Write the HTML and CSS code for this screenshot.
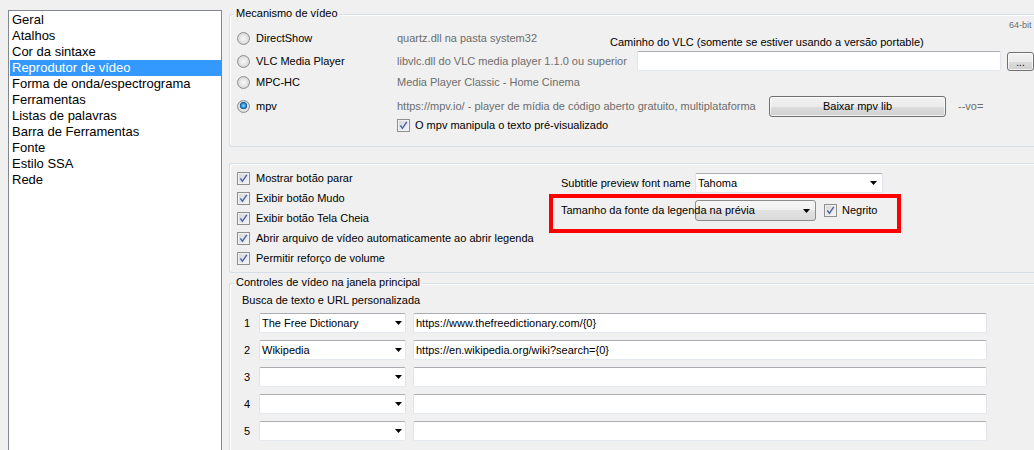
FILE: index.html
```html
<!DOCTYPE html>
<html lang="pt">
<head>
<meta charset="utf-8">
<title>Configurações - Reprodutor de vídeo</title>
<link rel="stylesheet" href="styles.css">
</head>
<body>
<div class="window">
  <ul class="nav">
    <li>Geral</li>
    <li>Atalhos</li>
    <li>Cor da sintaxe</li>
    <li class="sel">Reprodutor de vídeo</li>
    <li>Forma de onda/espectrograma</li>
    <li>Ferramentas</li>
    <li>Listas de palavras</li>
    <li>Barra de Ferramentas</li>
    <li>Fonte</li>
    <li>Estilo SSA</li>
    <li>Rede</li>
  </ul>

  <div class="main">
    <section class="group g1">
      <div class="legend">Mecanismo de vídeo</div>
      <div class="bits">64-bit</div>
      <div class="erow r1">
        <label class="opt"><span class="radio"></span>DirectShow</label>
        <span class="desc d1">quartz.dll na pasta system32</span>
        <span class="vlc-label">Caminho do VLC (somente se estiver usando a versão portable)</span>
      </div>
      <div class="erow r2">
        <label class="opt"><span class="radio"></span>VLC Media Player</label>
        <span class="desc d2">libvlc.dll do VLC media player 1.1.0 ou superior</span>
        <span class="textbox vlc-path"></span>
        <span class="btn btn-small">...</span>
      </div>
      <div class="erow r3">
        <label class="opt"><span class="radio"></span>MPC-HC</label>
        <span class="desc">Media Player Classic - Home Cinema</span>
      </div>
      <div class="erow r4">
        <label class="opt"><span class="radio on"></span>mpv</label>
        <span class="desc d4">https://mpv.io/ - player de mídia de código aberto gratuito, multiplataforma</span>
        <span class="btn btn-mpv">Baixar mpv lib</span>
        <span class="vo">--vo=</span>
      </div>
      <div class="erow r5">
        <span class="cb"><svg viewBox="0 0 11 11" width="11" height="11"><path d="M2.3 5.4 L4.4 8.3 L8.8 1.8" fill="none" stroke="#4a67a8" stroke-width="1.5"/></svg></span>
        <span>O mpv manipula o texto pré-visualizado</span>
      </div>
    </section>

    <section class="group g2">
      <div class="checks">
        <div class="check-row"><span class="cb"><svg viewBox="0 0 11 11" width="11" height="11"><path d="M2.3 5.4 L4.4 8.3 L8.8 1.8" fill="none" stroke="#4a67a8" stroke-width="1.5"/></svg></span>Mostrar botão parar</div>
        <div class="check-row"><span class="cb"><svg viewBox="0 0 11 11" width="11" height="11"><path d="M2.3 5.4 L4.4 8.3 L8.8 1.8" fill="none" stroke="#4a67a8" stroke-width="1.5"/></svg></span>Exibir botão Mudo</div>
        <div class="check-row"><span class="cb"><svg viewBox="0 0 11 11" width="11" height="11"><path d="M2.3 5.4 L4.4 8.3 L8.8 1.8" fill="none" stroke="#4a67a8" stroke-width="1.5"/></svg></span>Exibir botão Tela Cheia</div>
        <div class="check-row"><span class="cb"><svg viewBox="0 0 11 11" width="11" height="11"><path d="M2.3 5.4 L4.4 8.3 L8.8 1.8" fill="none" stroke="#4a67a8" stroke-width="1.5"/></svg></span>Abrir arquivo de vídeo automaticamente ao abrir legenda</div>
        <div class="check-row"><span class="cb"><svg viewBox="0 0 11 11" width="11" height="11"><path d="M2.3 5.4 L4.4 8.3 L8.8 1.8" fill="none" stroke="#4a67a8" stroke-width="1.5"/></svg></span>Permitir reforço de volume</div>
      </div>
      <div class="subs">
        <div class="font-row">
          <span class="lbl">Subtitle preview font name</span>
          <span class="combo combo-font"><span class="ctext">Tahoma</span><svg class="arr" width="7" height="4" viewBox="0 0 7 4"><polygon points="0,0 7,0 3.5,4"/></svg></span>
        </div>
        <div class="redbox">
          <div class="size-row">
            <span class="lbl lbl-over">Tamanho da fonte da legenda na prévia</span>
            <span class="combo-size"><svg class="arr" width="7" height="4" viewBox="0 0 7 4"><polygon points="0,0 7,0 3.5,4"/></svg></span>
            <span class="cb cb-neg"><svg viewBox="0 0 11 11" width="11" height="11"><path d="M2.3 5.4 L4.4 8.3 L8.8 1.8" fill="none" stroke="#4a67a8" stroke-width="1.5"/></svg></span>
            <span>Negrito</span>
          </div>
        </div>
      </div>
    </section>

    <section class="group g3">
      <div class="legend">Controles de vídeo na janela principal</div>
      <div class="busca">Busca de texto e URL personalizada</div>
      <div class="url-rows">
        <div class="url-row">
          <span class="num">1</span>
          <span class="combo combo-site"><span class="ctext">The Free Dictionary</span><svg class="arr" width="7" height="4" viewBox="0 0 7 4"><polygon points="0,0 7,0 3.5,4"/></svg></span>
          <span class="textbox url">https://www.thefreedictionary.com/{0}</span>
        </div>
        <div class="url-row">
          <span class="num">2</span>
          <span class="combo combo-site"><span class="ctext">Wikipedia</span><svg class="arr" width="7" height="4" viewBox="0 0 7 4"><polygon points="0,0 7,0 3.5,4"/></svg></span>
          <span class="textbox url">https://en.wikipedia.org/wiki?search={0}</span>
        </div>
        <div class="url-row">
          <span class="num">3</span>
          <span class="combo combo-site"><span class="ctext"></span><svg class="arr" width="7" height="4" viewBox="0 0 7 4"><polygon points="0,0 7,0 3.5,4"/></svg></span>
          <span class="textbox url"></span>
        </div>
        <div class="url-row">
          <span class="num">4</span>
          <span class="combo combo-site"><span class="ctext"></span><svg class="arr" width="7" height="4" viewBox="0 0 7 4"><polygon points="0,0 7,0 3.5,4"/></svg></span>
          <span class="textbox url"></span>
        </div>
        <div class="url-row">
          <span class="num">5</span>
          <span class="combo combo-site"><span class="ctext"></span><svg class="arr" width="7" height="4" viewBox="0 0 7 4"><polygon points="0,0 7,0 3.5,4"/></svg></span>
          <span class="textbox url"></span>
        </div>
      </div>
    </section>
  </div>
</div>
</body>
</html>
```

FILE: styles.css
```css
html, body {
  margin: 0;
  padding: 0;
  width: 1034px;
  height: 450px;
  overflow: hidden;
  background: #f0f0f0;
}

body {
  font-family: "Liberation Sans", Arial, sans-serif;
  font-size: 11px;
  line-height: 13px;
  color: #000;
}

.window {
  display: flex;
  align-items: flex-start;
  padding: 10px 0 0 8px;
  height: 440px;
}

/* left category list */
.nav {
  list-style: none;
  margin: 0;
  padding: 1px 0 0 1px;
  width: 214px;
  height: 440px;
  box-sizing: border-box;
  border: 1px solid #828790;
  border-bottom: 0;
  background: #fff;
  font-size: 13px;
  line-height: 16px;
  flex: none;
}

.nav li {
  height: 16px;
  padding-left: 2px;
  white-space: nowrap;
}

.nav li.sel {
  background: #3399ff;
  color: #fff;
}

/* right side */
.main {
  margin: 4px 0 0 7px;
  width: 805px;
  display: flex;
  flex-direction: column;
  flex: none;
}

.group {
  border: 1px solid #d5dfe5;
  border-right: 0;
  border-radius: 3px 0 0 3px;
  box-shadow: inset 1px 1px 0 #fff;
  box-sizing: border-box;
}

.legend {
  width: fit-content;
  height: 13px;
  line-height: 13px;
  margin: -8px 0 0 4px;
  padding: 0 2px;
  background: #f0f0f0;
  white-space: nowrap;
}

/* group 1 */
.g1 {
  height: 133px;
}

.bits {
  height: 10px;
  margin-left: 779px;
  font-size: 9px;
  line-height: 10px;
  color: #6d6d6d;
}

.erow {
  display: flex;
  align-items: center;
  padding-left: 7px;
  white-space: nowrap;
}

.opt {
  display: flex;
  align-items: center;
  width: 160px;
  flex: none;
}

.radio {
  width: 13px;
  height: 13px;
  margin-right: 6px;
  border-radius: 50%;
  box-sizing: border-box;
  border: 1px solid #8e8f8f;
  background: radial-gradient(circle at 50% 50%, #f8f8f8 0, #e9e9e9 3px, #d4d4d4 6px);
  flex: none;
}

.radio.on {
  background:
    radial-gradient(circle at 50% 42%, #9be0ff 0, #2c94e0 2px, #1b5a93 3.4px, rgba(27,90,147,0) 4px),
    radial-gradient(circle at 50% 50%, #f8f8f8 0, #e9e9e9 3px, #d4d4d4 6px);
}

.desc {
  color: #6d6d6d;
  flex: none;
}

.d1 { width: 213px; }
.d2 { width: 240px; }
.d4 { width: 372px; }

.r1 { height: 16px; }

.vlc-label {
  align-self: flex-start;
  margin-top: 6px;
}

.r2 { height: 20px; margin-top: 5px; }
.r3 { height: 16px; margin-top: 3px; }
.r4 { height: 21px; margin-top: 6px; }
.r5 { height: 13px; margin-top: 2px; padding-left: 167px; }

.textbox {
  display: flex;
  align-items: center;
  height: 20px;
  box-sizing: border-box;
  background: #fff;
  border: 1px solid;
  border-color: #abadb3 #e2e3ea #e3e9ef #e2e3ea;
  border-radius: 2px;
  flex: none;
  white-space: nowrap;
  overflow: hidden;
}

.vlc-path { width: 364px; }

.btn {
  display: flex;
  align-items: center;
  justify-content: center;
  box-sizing: border-box;
  border: 1px solid #707070;
  border-radius: 3px;
  background: linear-gradient(#f2f2f2, #ebebeb 50%, #dddddd 50%, #cfcfcf);
  box-shadow: inset 0 0 0 1px rgba(255,255,255,0.7);
  flex: none;
}

.btn-small {
  width: 27px;
  height: 19px;
  margin-left: 6px;
  font-size: 10px;
  padding-top: 2px;
}

.btn-mpv {
  width: 177px;
  height: 21px;
}

.vo {
  margin-left: 12px;
  color: #6d6d6d;
}

/* checkbox */
.cb {
  display: flex;
  align-items: center;
  justify-content: center;
  width: 13px;
  height: 13px;
  box-sizing: border-box;
  margin-right: 6px;
  border: 1px solid #8f8f8f;
  background: linear-gradient(135deg, #d6d6d6, #f6f6f6);
  box-shadow: inset 0 0 0 1px #f2f2f2;
  flex: none;
}

.r5 .cb { margin-right: 5px; }

/* group 2 */
.g2 {
  height: 110px;
  margin-top: 16px;
  display: flex;
  align-items: flex-start;
}

.checks {
  width: 312px;
  padding: 4px 0 0 7px;
  flex: none;
}

.check-row {
  display: flex;
  align-items: center;
  height: 20px;
  white-space: nowrap;
}

.subs {
  display: flex;
  flex-direction: column;
  align-items: flex-start;
  padding-top: 9px;
}

.font-row {
  display: flex;
  align-items: center;
  height: 20px;
  margin-left: 12px;
}

.lbl {
  width: 134px;
  flex: none;
  white-space: nowrap;
}

.combo {
  display: flex;
  align-items: center;
  height: 20px;
  box-sizing: border-box;
  padding: 0 3px 0 2px;
  background: #fff;
  border: 1px solid;
  border-color: #abadb3 #e2e3ea #e3e9ef #e2e3ea;
  border-radius: 2px;
  flex: none;
}

.ctext {
  flex: 1;
  white-space: nowrap;
  overflow: hidden;
}

.arr {
  flex: none;
  display: block;
}

.combo-font { width: 188px; padding-right: 5px; }

.redbox {
  margin-top: 1px;
  width: 352px;
  height: 39px;
  box-sizing: border-box;
  border: 4px solid #ff0000;
  padding: 2px 0 0 8px;
}

.size-row {
  display: flex;
  align-items: center;
  height: 21px;
}

.lbl-over {
  position: relative;
  z-index: 1;
}

.combo-size {
  display: flex;
  align-items: center;
  justify-content: flex-end;
  width: 121px;
  height: 21px;
  box-sizing: border-box;
  padding-right: 5px;
  border: 1px solid #8c8c8c;
  border-radius: 3px;
  background: linear-gradient(#f7f7f7, #efefef 50%, #e2e2e2 50%, #d9d9d9);
  flex: none;
}

.cb-neg {
  margin-left: 8px;
  margin-right: 5px;
}

/* group 3 */
.g3 {
  margin-top: 10px;
  height: 167px;
  border-bottom: 0;
  border-radius: 3px 0 0 0;
}

.busca {
  margin: 5px 0 0 12px;
  white-space: nowrap;
}

.url-rows {
  display: flex;
  flex-direction: column;
  gap: 7px;
  margin-top: 6px;
  padding-left: 14px;
}

.url-row {
  display: flex;
  align-items: center;
  height: 20px;
}

.num {
  width: 15px;
  flex: none;
}

.combo-site { width: 147px; }

.url {
  width: 574px;
  margin-left: 7px;
  padding-left: 2px;
}
```
